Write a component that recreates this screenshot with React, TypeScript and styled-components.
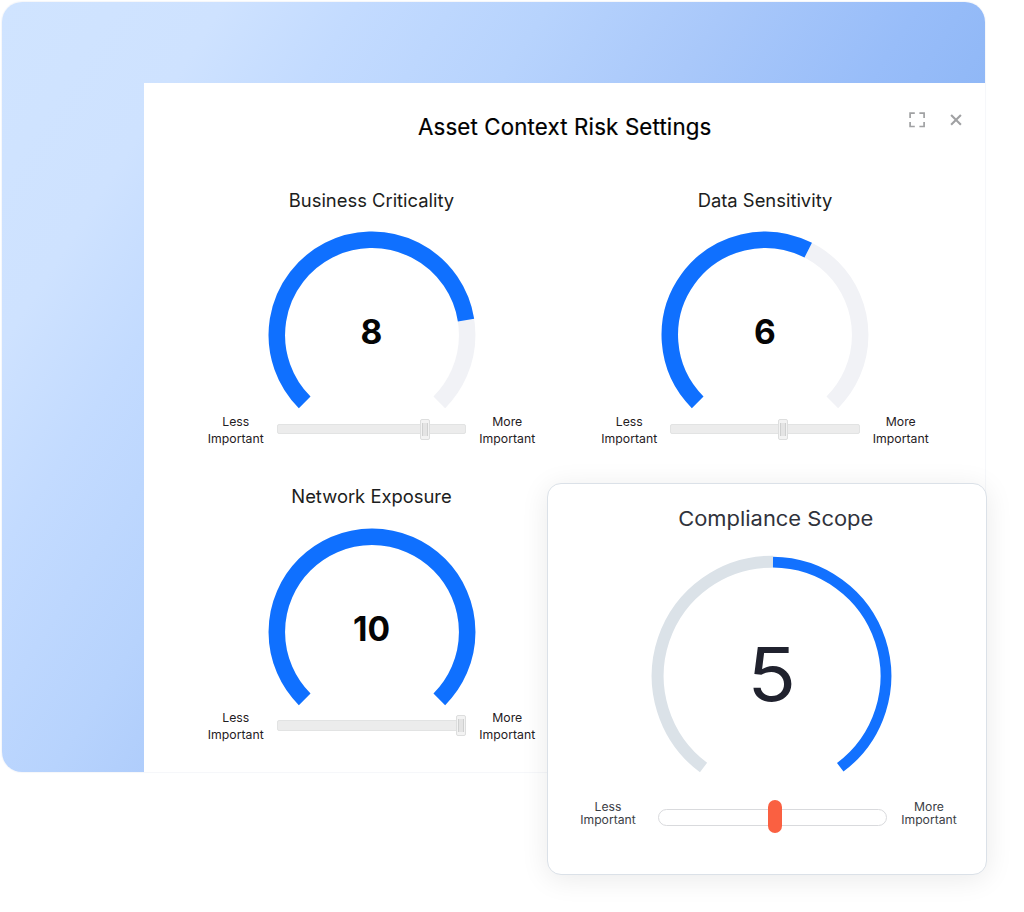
import React from "react";
import styled, { createGlobalStyle } from "styled-components";

const GlobalStyle = createGlobalStyle`
  * { box-sizing: border-box; }
  body { margin: 0; background: #fff; font-family: Inter, "Liberation Sans", sans-serif; }
`;

const Page = styled.main`
  position: relative;
  width: 1024px;
  height: 912px;
  padding: 2px;
  overflow: hidden;
  background: #fff;
`;

const Backdrop = styled.div`
  width: 983.4px;
  height: 770px;
  padding: 81px 0 0 142px;
  border-radius: 20px 20px 0 20px;
  background: linear-gradient(123deg, #d0e4ff 0%, #cee2ff 15%, #c3dbff 24%, #b7d3fd 37%, #a9c8fa 49%, #98bdf9 62%, #8fb7f6 71%);
  box-shadow: 0 0 1px 1px #f6f7fa;
`;

const Panel = styled.section`
  display: flex;
  flex-direction: column;
  height: 689px;
  background: #fff;
`;

const PanelHeader = styled.header`
  display: grid;
  grid-template-columns: 1fr auto 1fr;
  align-items: start;
  height: 98px;
  padding: 27px 19.4px 0 19.4px;
`;

const PanelTitle = styled.h1`
  grid-column: 2;
  margin: 3px 0 0;
  font-size: 22.3px;
  font-weight: 400;
  line-height: 28px;
  letter-spacing: 0.15px;
  color: #000;
  -webkit-text-stroke: 0.2px #000;
  white-space: nowrap;
`;

const Actions = styled.div`
  display: flex;
  justify-content: flex-end;
  gap: 19px;
`;

const IconButton = styled.button`
  display: flex;
  padding: 0;
  border: 0;
  background: none;
  color: #a0a1a3;
`;

const MetricGrid = styled.div`
  display: grid;
  grid-template-columns: 393.5px 393.5px;
  grid-auto-rows: 296.6px;
  padding-left: 30.75px;
`;

const Metric = styled.article`
  display: flex;
  flex-direction: column;
  align-items: center;
  padding-top: 8.7px;
`;

const MetricTitle = styled.h2`
  margin: 0;
  font-size: 18.4px;
  font-weight: 400;
  line-height: 24px;
  color: #1c1d20;
`;

const GaugeBox = styled.div<{ $size: number; $height: number; $top: number }>`
  display: grid;
  flex: none;
  width: ${(p) => p.$size}px;
  height: ${(p) => p.$height}px;
  margin-top: ${(p) => p.$top}px;
  place-items: start center;
  > * { grid-area: 1 / 1; }
  svg { display: block; }
`;

const GaugeValue = styled.span<{ $size: number; $weight: number; $color: string; $box: number; $stretch?: number }>`
  font-size: ${(p) => p.$size}px;
  font-weight: ${(p) => p.$weight};
  line-height: ${(p) => p.$box}px;
  color: ${(p) => p.$color};
  transform: scaleX(${(p) => p.$stretch ?? 1});
`;

const SliderRow = styled.div<{ $gap: number; $top: number }>`
  display: flex;
  align-items: center;
  gap: ${(p) => p.$gap}px;
  margin-top: ${(p) => p.$top}px;
`;

const EndLabel = styled.span`
  width: 58px;
  font-size: 12.25px;
  line-height: 17.2px;
  color: #1f2023;
  text-align: center;
`;

const ScopeLabel = styled(EndLabel)<{ $end?: boolean }>`
  margin: ${(p) => (p.$end ? "0 8px 6px -8px" : "0 0 6px")};
  font-size: 11.2px;
  line-height: 13px;
  color: #3b3d45;
  transform: scaleX(1.09);
`;

const Track = styled.div`
  display: flex;
  align-items: center;
  width: 189.5px;
  height: 10.5px;
  margin-bottom: 1.6px;
  border: 1px solid #e2e3e3;
  border-radius: 2px;
  background: #ececec;
`;

const Thumb = styled.div`
  display: flex;
  flex: none;
  align-items: center;
  justify-content: center;
  width: 10.5px;
  height: 21px;
  border: 1px solid #dddede;
  border-radius: 2px;
  background: #f3f3f3;
  &::before {
    content: "";
    width: 4.5px;
    height: 13px;
    border: solid #cfd0d0;
    border-width: 0 1.4px;
    background: #e4e4e4;
  }
`;

const ScopeCard = styled.section`
  position: absolute;
  left: 547px;
  top: 483px;
  display: flex;
  flex-direction: column;
  align-items: center;
  width: 440px;
  height: 392px;
  padding: 20px 0 0 10px;
  border: 1.5px solid #dbe1e8;
  border-radius: 14px;
  background: #fff;
  box-shadow: 0 4px 28px rgba(0, 0, 0, 0.085);
`;

const ScopeTitle = styled.h2`
  margin: 0;
  font-size: 20.4px;
  font-weight: 400;
  line-height: 28px;
  color: #30323b;
  transform: translate(4px, 0.5px) scaleX(1.075);
`;

const ScopeTrack = styled.div`
  display: flex;
  align-items: center;
  justify-content: center;
  width: 229px;
  height: 16.5px;
  padding-left: 6px;
  border: 1.3px solid #d9dadd;
  border-radius: 9px;
`;

const ScopeThumb = styled.div`
  flex: none;
  width: 14.5px;
  height: 32.5px;
  margin-top: -2px;
  border-radius: 7.25px;
  background: #fa6041;
`;

const point = (c: number, r: number, deg: number) => {
  const a = (deg * Math.PI) / 180;
  return `${(c + r * Math.sin(a)).toFixed(2)} ${(c - r * Math.cos(a)).toFixed(2)}`;
};

// Angles are measured clockwise from twelve o'clock.
const arc = (c: number, r: number, from: number, to: number) =>
  `M${point(c, r, from)} A${r} ${r} 0 ${to - from > 180 ? 1 : 0} 1 ${point(c, r, to)}`;

const ExpandIcon = () => (
  <svg width="20" height="20" viewBox="0 0 20 20" fill="none" stroke="currentColor" strokeWidth="1.7">
    <path d="M7.8 3.2H3.1V8M12.4 3.2h4.7V8M17.1 12v4.5h-4.7M7.8 16.5H3.1V12" />
  </svg>
);

const CloseIcon = () => (
  <svg width="20" height="20" viewBox="0 0 20 20" fill="none" stroke="currentColor" strokeWidth="2.1">
    <path d="M5.1 4.9l9.8 9.8M14.9 4.9L5.1 14.7" />
  </svg>
);

const metrics = [
  { title: "Business Criticality", value: 8 },
  { title: "Data Sensitivity", value: 6 },
  { title: "Network Exposure", value: 10 },
];

const MetricCard = ({ title, value }: { title: string; value: number }) => (
  <Metric>
    <MetricTitle>{title}</MetricTitle>
    <GaugeBox $size={208} $height={181} $top={19.5}>
      <svg width="208" height="181" viewBox="0 0 208 181" fill="none" strokeWidth="16.5">
        <path d={arc(104, 95.2, -135, 135)} stroke="#f1f2f6" />
        <path d={arc(104, 95.2, -135, -135 + value * 27)} stroke="#0f70ff" />
      </svg>
      <GaugeValue $size={33.5} $weight={700} $color="#050505" $box={203}>
        {value}
      </GaugeValue>
    </GaugeBox>
    <SliderRow $gap={12} $top={0.6}>
      <EndLabel>Less<br />Important</EndLabel>
      <Track>
        <Thumb style={{ marginLeft: (value / 10) * 179 - 1 }} />
      </Track>
      <EndLabel>More<br />Important</EndLabel>
    </SliderRow>
  </Metric>
);

export default function App() {
  return (
    <>
      <GlobalStyle />
      <Page>
        <Backdrop>
          <Panel>
            <PanelHeader>
              <PanelTitle>Asset Context Risk Settings</PanelTitle>
              <Actions>
                <IconButton aria-label="Expand"><ExpandIcon /></IconButton>
                <IconButton aria-label="Close"><CloseIcon /></IconButton>
              </Actions>
            </PanelHeader>
            <MetricGrid>
              {metrics.map((m) => <MetricCard key={m.title} {...m} />)}
            </MetricGrid>
          </Panel>
        </Backdrop>
        <ScopeCard>
          <ScopeTitle>Compliance Scope</ScopeTitle>
          <GaugeBox $size={242} $height={226} $top={23}>
            <svg width="242" height="226" viewBox="0 0 242 226" fill="none">
              <path d={arc(121, 114.3, -143.2, 0.5)} stroke="#dbe2e8" strokeWidth="12" />
              <path d={arc(121, 113.9, 0.5, 143.2)} stroke="#1271ff" strokeWidth="10.8" />
            </svg>
            <GaugeValue $size={74.5} $weight={400} $color="#20222e" $box={239} $stretch={1.08}>5</GaugeValue>
          </GaugeBox>
          <SliderRow $gap={21} $top={20.4}>
            <ScopeLabel>Less<br />Important</ScopeLabel>
            <ScopeTrack><ScopeThumb /></ScopeTrack>
            <ScopeLabel $end>More<br />Important</ScopeLabel>
          </SliderRow>
        </ScopeCard>
      </Page>
    </>
  );
}
